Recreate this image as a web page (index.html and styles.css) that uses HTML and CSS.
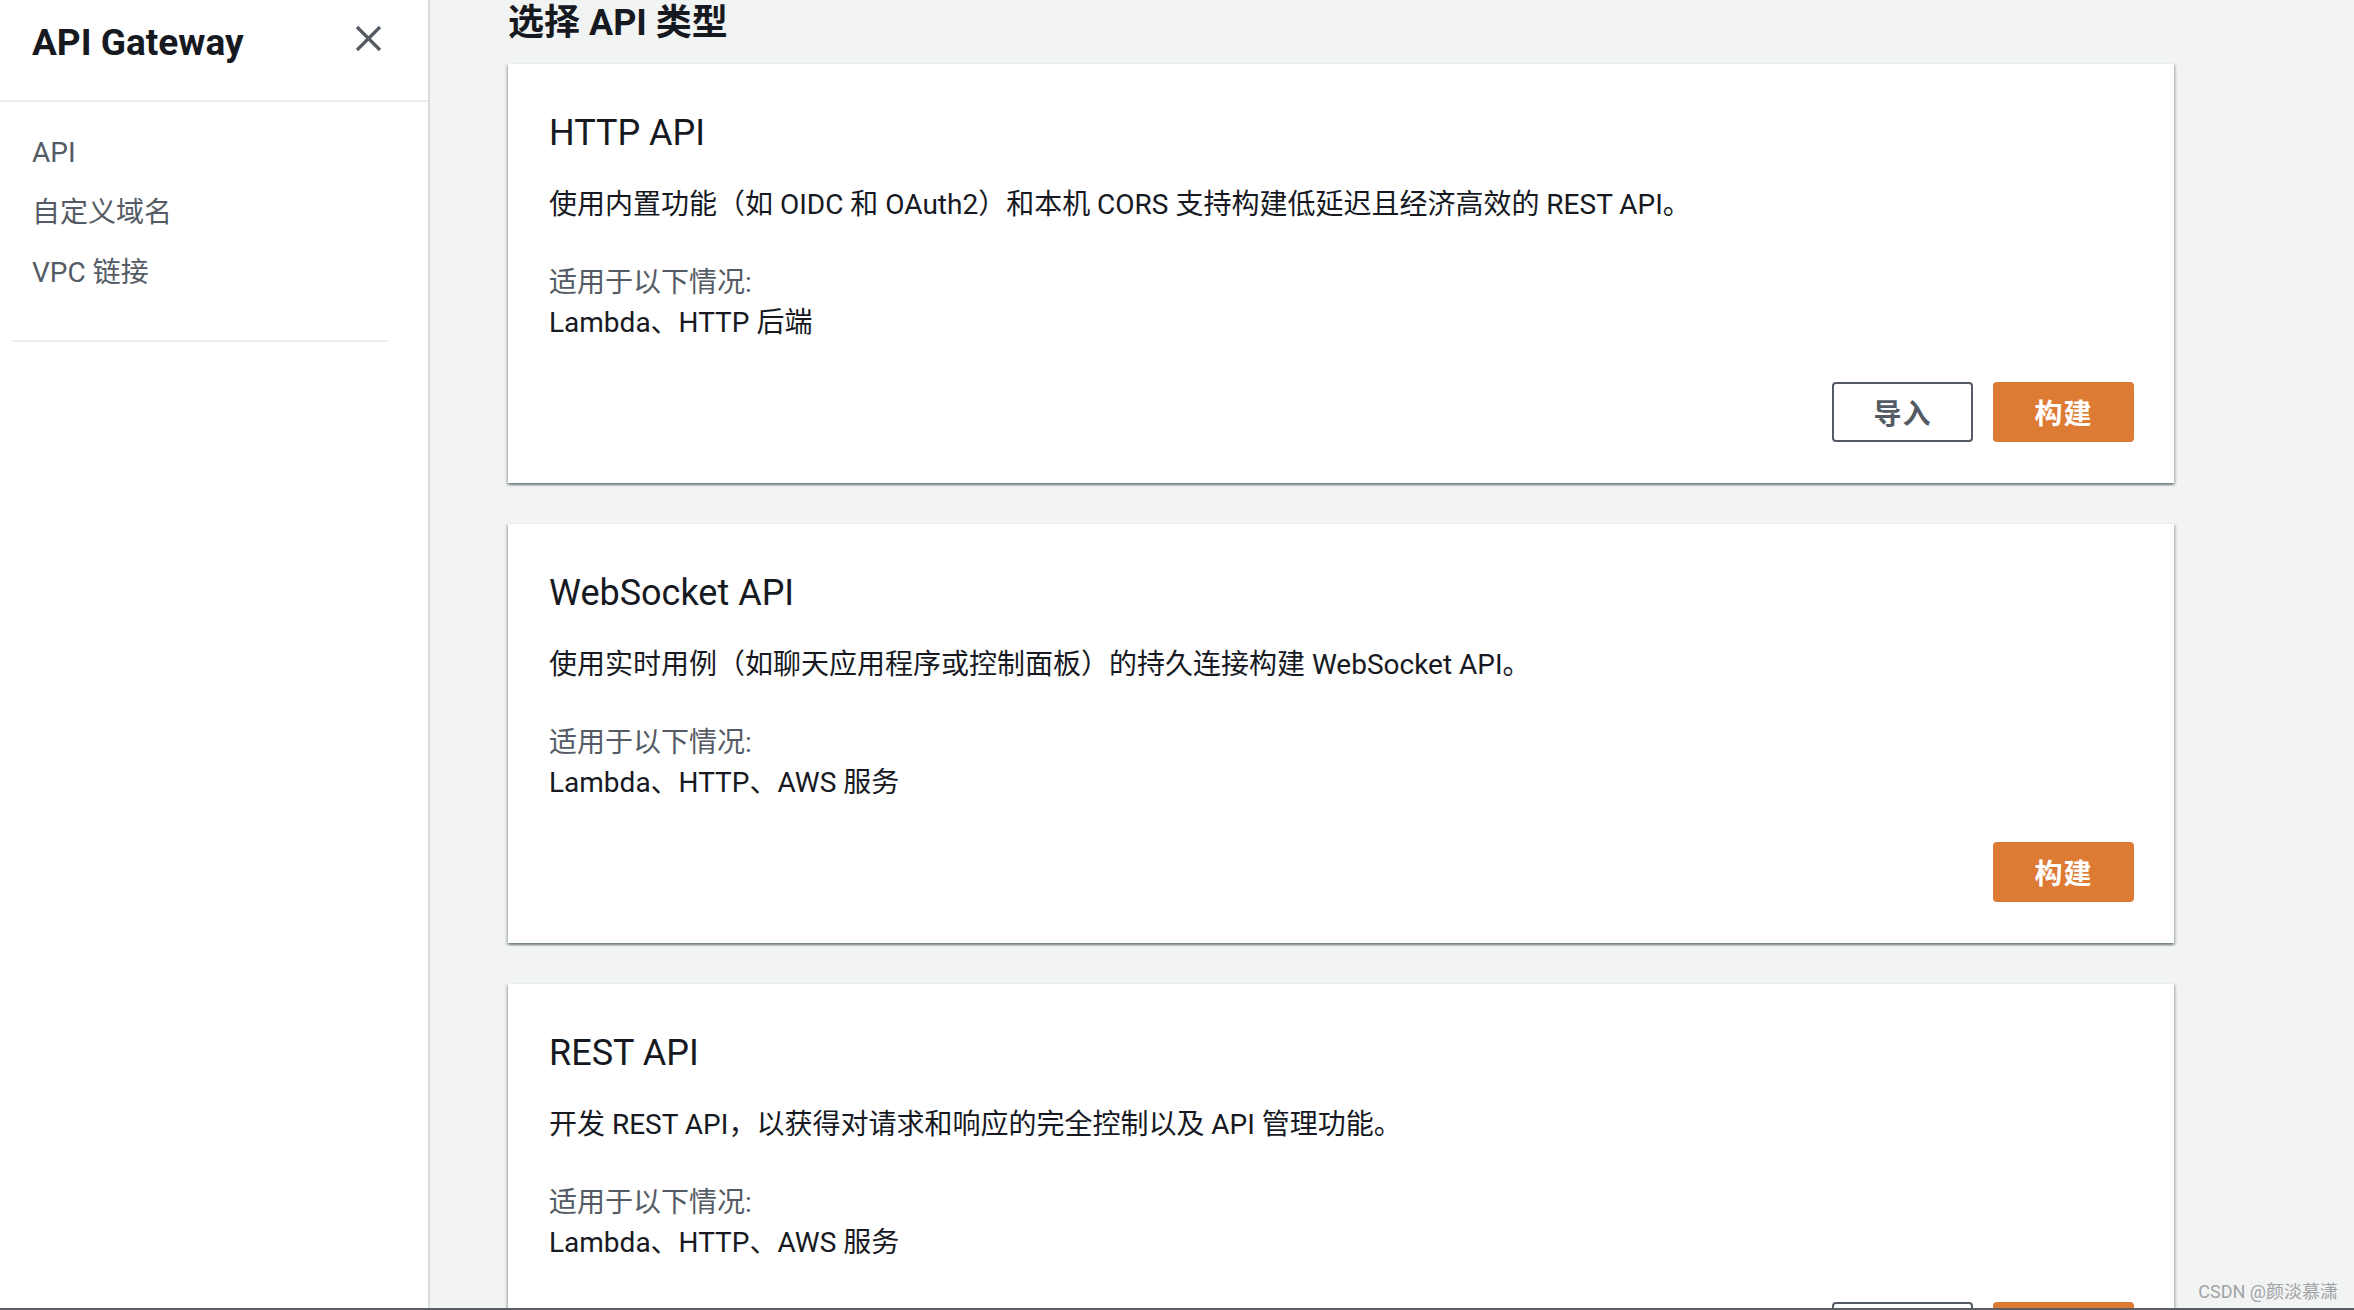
FILE: index.html
```html
<!DOCTYPE html>
<html lang="zh-CN">
<head>
<meta charset="utf-8">
<title>API Gateway</title>
<link rel="stylesheet" href="styles.css">
</head>
<body>
<div class="app">
  <aside class="sidebar">
    <div class="side-header">
      <h2 class="side-title">API Gateway</h2>
      <button class="close-btn" aria-label="关闭">
        <svg width="27" height="27" viewBox="0 0 27 27"><path d="M2 2 L25 25 M25 2 L2 25" stroke="#545b64" stroke-width="3.2" stroke-linecap="butt" fill="none"/></svg>
      </button>
    </div>
    <nav class="side-nav">
      <a class="nav-item">API</a>
      <a class="nav-item">自定义域名</a>
      <a class="nav-item">VPC 链接</a>
    </nav>
    <hr class="side-divider">
  </aside>
  <main class="main">
    <h1 class="page-title">选择 API 类型</h1>
    <section class="card">
      <h3 class="card-title">HTTP API</h3>
      <p class="card-desc">使用内置功能（如 OIDC 和 OAuth2）和本机 CORS 支持构建低延迟且经济高效的 REST API。</p>
      <div class="use-label">适用于以下情况:</div>
      <div class="use-value">Lambda、HTTP 后端</div>
      <div class="card-actions">
        <button class="btn btn-normal">导入</button>
        <button class="btn btn-primary">构建</button>
      </div>
    </section>
    <section class="card">
      <h3 class="card-title">WebSocket API</h3>
      <p class="card-desc">使用实时用例（如聊天应用程序或控制面板）的持久连接构建 WebSocket API。</p>
      <div class="use-label">适用于以下情况:</div>
      <div class="use-value">Lambda、HTTP、AWS 服务</div>
      <div class="card-actions">
        <button class="btn btn-primary">构建</button>
      </div>
    </section>
    <section class="card">
      <h3 class="card-title">REST API</h3>
      <p class="card-desc">开发 REST API，以获得对请求和响应的完全控制以及 API 管理功能。</p>
      <div class="use-label">适用于以下情况:</div>
      <div class="use-value">Lambda、HTTP、AWS 服务</div>
      <div class="card-actions">
        <button class="btn btn-normal">导入</button>
        <button class="btn btn-primary">构建</button>
      </div>
    </section>
  </main>
  <div class="watermark">CSDN @颜淡慕潇</div>
</div>
</body>
</html>
```
FILE: styles.css
```css
* { box-sizing: border-box; }
html, body {
  margin: 0;
  padding: 0;
  background: #f2f3f3;
  font-family: Roboto, "Noto Sans CJK SC", sans-serif;
  color: #16191f;
}
.app {
  position: relative;
  display: flex;
  height: 1310px;
  overflow: hidden;
  border-bottom: 2px solid #5a5e64;
}
.sidebar {
  flex: 0 0 430px;
  background: #fff;
  border-right: 2px solid #d9dcdd;
}
.side-header {
  display: flex;
  justify-content: space-between;
  align-items: flex-start;
  height: 102px;
  padding: 21px 46px 0 32px;
  border-bottom: 2px solid #eaeded;
}
.side-title {
  margin: 0;
  font-size: 37px;
  line-height: 44px;
  font-weight: 700;
  color: #16191f;
}
.close-btn {
  margin-top: 4px;
  padding: 0;
  border: 0;
  background: none;
  width: 27px;
  height: 27px;
  display: flex;
}
.side-nav {
  display: flex;
  flex-direction: column;
  padding: 21px 0 0 32px;
}
.nav-item {
  padding: 10px 0;
  font-size: 28px;
  line-height: 40px;
  color: #545b64;
}
.side-divider {
  margin: 37px 40px 0 12px;
  border: 0;
  border-top: 2px solid #eaeded;
  height: 0;
}
.main {
  flex: 1;
  padding: 3px 180px 0 78px;
  display: flex;
  flex-direction: column;
  gap: 40px;
}
.page-title {
  margin: 0 0 -20px;
  font-size: 36px;
  line-height: 40px;
  font-weight: 700;
  color: #16191f;
}
.card {
  flex: 0 0 auto;
  background: #fff;
  border-top: 1px solid #eaeded;
  box-shadow: 0 2px 2px 0 rgba(0, 28, 36, 0.35), 2px 2px 2px 0 rgba(0, 28, 36, 0.15), -2px 2px 2px 0 rgba(0, 28, 36, 0.15);
  padding: 47px 40px 41px 41px;
}
.card-title {
  margin: 0;
  font-size: 36px;
  line-height: 44px;
  font-weight: 400;
}
.card-desc {
  margin: 30px 0 0;
  font-size: 28px;
  line-height: 40px;
}
.use-label {
  margin-top: 38px;
  font-size: 28px;
  line-height: 40px;
  color: #545b64;
}
.use-value {
  font-size: 28px;
  line-height: 40px;
}
.card-actions {
  margin-top: 39px;
  display: flex;
  justify-content: flex-end;
  gap: 20px;
}
.btn {
  width: 141px;
  height: 60px;
  border-radius: 4px;
  font-family: Roboto, "Noto Sans CJK SC", sans-serif;
  font-size: 28px;
  font-weight: 700;
  letter-spacing: 1px;
  padding: 0;
}
.btn-normal {
  background: #fff;
  color: #545b64;
  border: 2px solid #545b64;
}
.btn-primary {
  background: #dd7a34;
  color: #fff;
  border: 2px solid #dd7a34;
}
.watermark {
  position: absolute;
  right: 16px;
  bottom: 4px;
  font-size: 18px;
  line-height: 24px;
  color: #a0a3a6;
}
```
